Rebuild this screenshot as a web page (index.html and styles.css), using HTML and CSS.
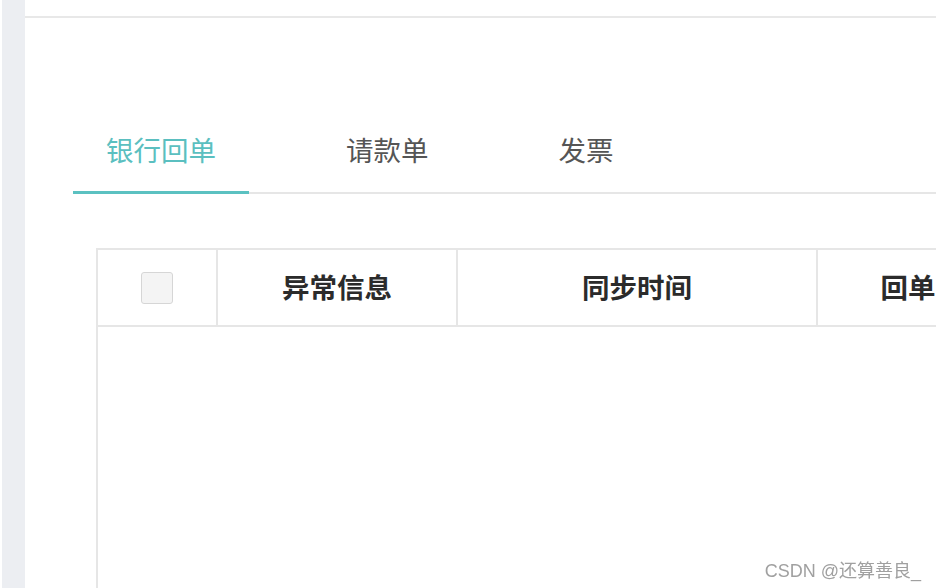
FILE: index.html
```html
<!DOCTYPE html>
<html lang="zh-CN">
<head>
  <meta charset="UTF-8" />
  <title>银行回单</title>
  <link rel="stylesheet" href="styles.css">
</head>
<body>
  <div class="layout">
    <aside class="side"></aside>

    <main class="main">
      <div class="topbar"></div>

      <div class="content">
        <!-- Tabs -->
        <div class="tabs">
          <div class="tab active">银行回单</div>
          <div class="tab">请款单</div>
          <div class="tab">发票</div>
        </div>

        <!-- Table -->
        <div class="table">
          <div class="thead">
            <div class="cell col-check"><span class="checkbox"></span></div>
            <div class="cell col-msg">异常信息</div>
            <div class="cell col-time">同步时间</div>
            <div class="cell col-rest">回单</div>
          </div>
          <div class="tbody"></div>
        </div>
      </div>
    </main>
  </div>

  <div class="watermark">CSDN @还算善良_</div>
</body>
</html>
```

FILE: styles.css
```css
body {
  margin: 0;
  font-family: "Noto Sans CJK SC", "Noto Sans", sans-serif;
  background: #fff;
  overflow: hidden;
}

.layout {
  display: flex;
  height: 588px;
  padding-left: 2px;
}

.side {
  width: 23px;
  flex: 0 0 23px;
  background: #eceef2;
}

.main {
  flex: 1;
  min-width: 0;
  overflow: hidden;
}

.topbar {
  height: 16px;
  border-bottom: 2px solid #e8e8e8;
}

.content {
  padding-left: 48px;
}

/* Tabs */
.tabs {
  display: flex;
  gap: 64px;
  margin-top: 108px;
  border-bottom: 2px solid #e6e6e6;
}

.tab {
  padding: 0 33px;
  height: 66px;
  font-size: 27.5px;
  line-height: 46px;
  color: #555;
  position: relative;
}

.tab.active {
  color: #5bbfc0;
}

.tab.active::after {
  content: "";
  position: absolute;
  left: 0;
  right: 0;
  bottom: -2px;
  height: 3px;
  background: #5bc1c1;
}

/* Table */
.table {
  margin: 54px 0 0 23px;
  border-top: 2px solid #e6e6e6;
  border-left: 2px solid #e6e6e6;
  height: 400px;
}

.thead {
  display: flex;
  height: 75px;
  border-bottom: 2px solid #e6e6e6;
}

.cell {
  display: flex;
  align-items: center;
  justify-content: center;
  padding-bottom: 3px;
  box-sizing: border-box;
  font-size: 27.5px;
  font-weight: bold;
  color: #2b2b2b;
  border-right: 2px solid #e6e6e6;
  white-space: nowrap;
}

.col-check {
  width: 120px;
  flex: 0 0 120px;
  padding-bottom: 0;
}
.col-msg { width: 240px; flex: 0 0 240px; }
.col-time { width: 360px; flex: 0 0 360px; }
.col-rest {
  width: 180px;
  flex: 0 0 180px;
  border-right: none;
}

.checkbox {
  width: 30px;
  height: 30px;
  border: 1px solid #d6d6d6;
  border-radius: 3px;
  background: #f4f4f4;
}

.watermark {
  position: fixed;
  right: 15px;
  bottom: 6px;
  font-family: "Liberation Sans", "Noto Sans CJK SC", sans-serif;
  font-size: 18px;
  color: #a0a0a0;
}
```
